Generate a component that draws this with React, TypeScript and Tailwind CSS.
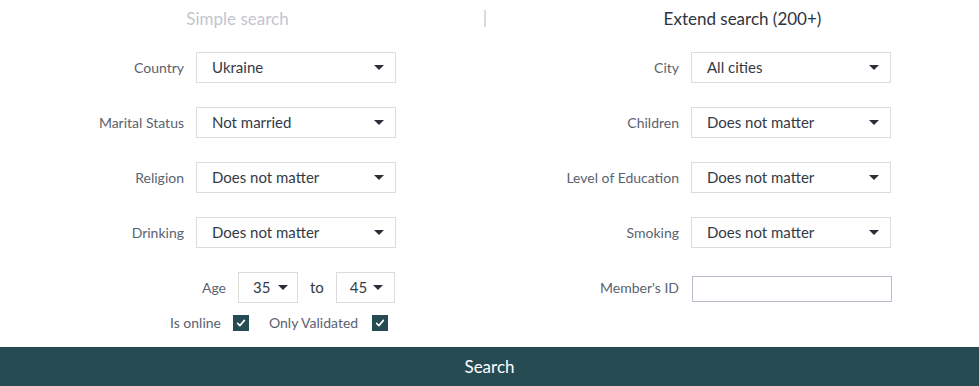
import React from "react";

const LEFT = [
  { label: "Country", value: "Ukraine" },
  { label: "Marital Status", value: "Not married" },
  { label: "Religion", value: "Does not matter" },
  { label: "Drinking", value: "Does not matter" },
];

const RIGHT = [
  { label: "City", value: "All cities" },
  { label: "Children", value: "Does not matter" },
  { label: "Level of Education", value: "Does not matter" },
  { label: "Smoking", value: "Does not matter" },
];

function Caret() {
  return <span className="h-0 w-0 border-x-[5px] border-t-[5px] border-x-transparent border-t-[#2b3038]" />;
}

function Select({ value, className = "" }: { value: string; className?: string }) {
  return (
    <div
      className={`flex h-[31px] items-center justify-between border border-[#dcdcdc] bg-white pl-[15px] pr-[11px] text-[15px] text-[#333a45] ${className}`}
    >
      <span>{value}</span>
      <Caret />
    </div>
  );
}

function Check() {
  return (
    <span className="flex h-4 w-4 items-center justify-center bg-[#264b52]">
      <svg viewBox="0 0 16 16" className="h-3 w-3" fill="none" stroke="white" strokeWidth="2.2" strokeLinecap="round" strokeLinejoin="round">
        <path d="M3.5 8.5l3 3 6-7" />
      </svg>
    </span>
  );
}

function Row({ label, value, labelW }: { label: string; value: string; labelW: string }) {
  return (
    <div className="flex h-[31px] items-center gap-3">
      <span className={`${labelW} text-right text-[14px] text-[#5a6270]`}>{label}</span>
      <Select value={value} className="w-[200px]" />
    </div>
  );
}

export default function App() {
  return (
    <div className="flex h-[386px] w-[979px] flex-col bg-white font-['Lato','Noto_Sans',sans-serif]">
      <div className="flex h-[37px] items-center">
        <div className="w-[484px] pr-[9px] text-center text-[17px] text-[#c3c6cd]">Simple search</div>
        <div className="h-[17px] w-[2px] bg-[#d9d9e3]" />
        <div className="flex-1 pl-[20px] text-center text-[17px] text-[#2e3440]">Extend search (200+)</div>
      </div>

      <div className="mt-[15px] flex flex-1">
        <div className="flex w-[489px] flex-col gap-6">
          {LEFT.map((r) => (
            <Row key={r.label} label={r.label} value={r.value} labelW="w-[184px]" />
          ))}
          <div className="flex h-[31px] items-center">
            <span className="w-[226px] text-right text-[14px] text-[#5a6270]">Age</span>
            <Select value="35" className="ml-3 w-[60px] !pl-[14px] gap-2" />
            <span className="mx-[12px] text-[15px] text-[#333a45]">to</span>
            <Select value="45" className="w-[59px] !pl-[13px]" />
          </div>
          <div className="-mt-[15px] flex items-center pl-[170px] text-[14px] text-[#5a6270]">
            <span>Is online</span>
            <span className="ml-[12px]"><Check /></span>
            <span className="ml-[20px]">Only Validated</span>
            <span className="ml-[14px]"><Check /></span>
          </div>
        </div>
        <div className="flex flex-1 flex-col gap-6">
          {RIGHT.map((r) => (
            <Row key={r.label} label={r.label} value={r.value} labelW="w-[190px]" />
          ))}
          <div className="flex h-[31px] items-center gap-3">
            <span className="w-[190px] text-right text-[14px] text-[#5a6270]">Member's ID</span>
            <div className="ml-px mt-[3px] h-[26px] w-[200px] border border-[#b9bccb] bg-white" />
          </div>
        </div>
      </div>

      <button className="flex h-[39px] w-full items-center justify-center bg-[#264b52] pt-px text-[17px] text-white">
        Search
      </button>
    </div>
  );
}
